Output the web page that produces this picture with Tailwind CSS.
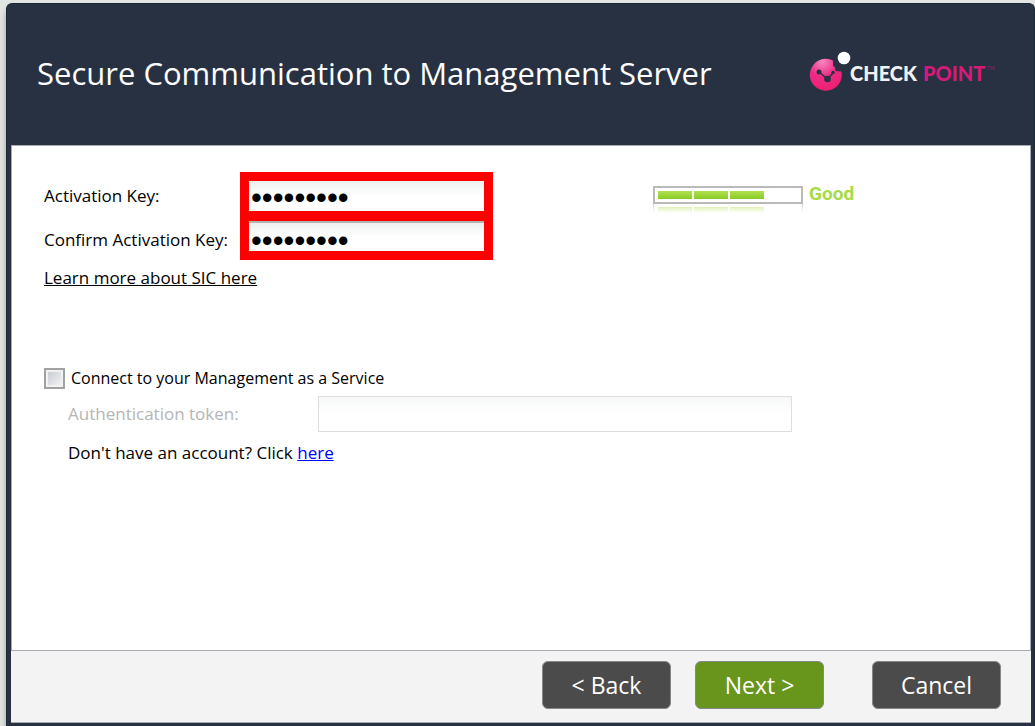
<!DOCTYPE html>
<html lang="en">
    <head>
        <meta charset="UTF-8" />
        <meta name="viewport" content="width=device-width, initial-scale=1.0" />
        <title>Secure Communication to Management Server</title>
        <script src="https://cdn.jsdelivr.net/npm/@tailwindcss/browser@4"></script>
    </head>
    <body class="bg-[#e2e5e2] font-['Open_Sans','Noto_Sans',sans-serif] text-[17px] leading-6 text-black">
        <form class="flex min-h-screen flex-col border-t-3 border-l-6 border-transparent">
            <div class="flex grow flex-col rounded-t-md border border-b-0 border-[#1b2838] bg-[#273142] pr-[3px] pb-[3px] pl-1 shadow-[0_6px_6px_#0000004d]">
                <header class="flex h-[141px] items-center justify-between pr-9 pb-1 pl-[26px]">
                    <h1 class="text-[31px] leading-10 text-white">Secure Communication to Management Server</h1>
                    <svg class="h-[44px] w-[190px] shrink-0" viewBox="0 0 190 44" role="img" aria-label="Check Point">
                        <defs>
                            <radialGradient id="ball" cx="0.4" cy="0.1" r="0.9">
                                <stop offset="0" stop-color="#f787bd" />
                                <stop offset="0.5" stop-color="#ec2b86" />
                                <stop offset="1" stop-color="#ee1f70" />
                            </radialGradient>
                        </defs>
                        <path d="M28 9.500A16 16 0 1 0 36.500 20.500L30.500 20L30 16.500L28 14.500Z" fill="url(#ball)" />
                        <path d="M14 21L22.500 28L28 22" fill="none" stroke="#273142" stroke-width="1.400" />
                        <circle cx="14" cy="21" r="2.500" fill="#273142" />
                        <circle cx="22.500" cy="28" r="3.300" fill="#273142" />
                        <circle cx="28" cy="21.500" r="1.700" fill="#273142" />
                        <circle cx="39" cy="7" r="6.300" fill="#fff" />
                        <text x="45" y="30" fill="#f1f1f3" class="font-['Lato',sans-serif] text-[20px] font-black">CHECK</text>
                        <text x="118" y="30" fill="#d51a78" class="font-['Lato',sans-serif] text-[20px] font-black">POINT</text>
                        <text x="182" y="19" fill="#94246b" class="font-['Lato',sans-serif] text-[5px]">TM</text>
                    </svg>
                </header>
                <main class="grow border border-[#a6abb3] bg-white px-8 pt-[26px] pb-10">
                    <div class="flex items-start">
                        <div class="w-[196px]">
                            <label for="key" class="flex h-11 items-center pt-1">Activation Key:</label>
                            <label for="confirm" class="flex h-11 items-center pt-1">Confirm Activation Key:</label>
                        </div>
                        <div class="flex w-[253px] flex-col gap-[10px] bg-[#ff0000] p-[9px]">
                            <input id="key" type="password" value="vpn123456" class="h-[30px] w-full bg-linear-to-b from-[#eef0f0] to-white to-50% px-[2px] pt-1 font-['Liberation_Sans',sans-serif] text-[31px] outline-none" />
                            <input id="confirm" type="password" value="vpn123456" class="h-[30px] w-full border-t-2 border-[#b4b4b4] bg-linear-to-b from-[#eef0f0] to-white to-50% px-[2px] pt-2 font-['Liberation_Sans',sans-serif] text-[31px] outline-none" />
                        </div>
                        <div class="ml-[160px] flex items-start gap-[6px] pt-[14px]" role="meter" aria-label="Key strength" aria-valuemin="0" aria-valuemax="4" aria-valuenow="3">
                            <div class="w-[150px]">
                                <div class="flex h-[18px] gap-[2px] border-2 border-[#b9b9b9] bg-white p-[3px]">
                                    <span class="w-[34px] bg-linear-to-b from-[#b2e04c] to-[#86cc24]"></span>
                                    <span class="w-[34px] bg-linear-to-b from-[#b2e04c] to-[#86cc24]"></span>
                                    <span class="w-[34px] bg-linear-to-b from-[#b2e04c] to-[#86cc24]"></span>
                                </div>
                                <div class="flex h-[9px] bg-linear-to-b from-[#d0d0d0] to-white px-px">
                                    <div class="flex grow gap-[2px] bg-white pt-[3px] pl-1">
                                        <span class="w-[34px] bg-linear-to-b from-[#e0f3b4] to-white"></span>
                                        <span class="w-[34px] bg-linear-to-b from-[#e0f3b4] to-white"></span>
                                        <span class="w-[34px] bg-linear-to-b from-[#e0f3b4] to-white"></span>
                                    </div>
                                </div>
                            </div>
                            <span class="-mt-1 font-['Roboto',sans-serif] text-[19px] font-bold text-[#a5dc45]">Good</span>
                        </div>
                    </div>
                    <a href="#" class="mt-[6px] inline-block underline">Learn more about SIC here</a>
                    <div class="mt-[76px] flex items-center gap-[6px]">
                        <input id="maas" type="checkbox" class="size-[21px] appearance-none border-2 border-[#a2a2a2] bg-linear-to-br from-[#c4c8d0] to-[#f6f6f6] shadow-[inset_0_0_0_2px_#f1f1f1]" />
                        <label for="maas" class="text-[16px] leading-6">Connect to your Management as a Service</label>
                    </div>
                    <div class="mt-[6px] flex items-center pl-6">
                        <label for="token" class="w-[250px] text-[#b5b5b5]">Authentication token:</label>
                        <input id="token" type="text" disabled class="h-9 w-[474px] border border-[#dedede] bg-linear-to-b from-[#f6f8f8] to-white to-50% px-2" />
                    </div>
                    <p class="mt-[9px] pl-6">Don't have an account? Click <a href="#" class="text-[#0000ff] underline">here</a></p>
                </main>
                <footer class="flex h-[72px] items-center justify-end border-b border-[#a6abb3] bg-[#f3f3f3] pr-[30px] pb-[3px] text-[23px] text-white">
                    <button type="button" class="h-12 w-[129px] rounded-md border border-[#83888b] bg-[#4b4b4b]">&lt; Back</button>
                    <button type="submit" class="ml-6 h-12 w-[129px] rounded-md border border-[#83888b] bg-[#68951c]">Next &gt;</button>
                    <button type="button" class="ml-12 h-12 w-[129px] rounded-md border border-[#83888b] bg-[#4b4b4b]">Cancel</button>
                </footer>
            </div>
        </form>
    </body>
</html>
